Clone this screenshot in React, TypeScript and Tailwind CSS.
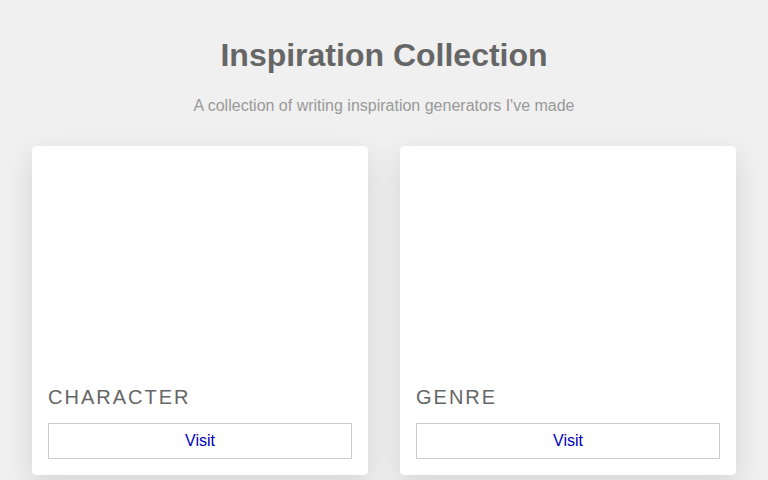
const items = ['Character', 'Genre']

function Card({ name }: { name: string }) {
  return (
    <div className="bg-white rounded-[4px] shadow-[0_10px_30px_rgba(0,0,0,0.12)] p-4 flex flex-col">
      <div className="h-[221px]" />
      <p className="text-[20px] leading-[28px] tracking-[2px] uppercase text-[#666]">{name}</p>
      <button className="mt-3 h-9 w-full border border-[#ccc] bg-white text-[16px] text-[#0000bb]">
        Visit
      </button>
    </div>
  )
}

export default function App() {
  return (
    <div className="min-h-screen bg-[#f0f0f0] px-8 pt-[37px] font-['Liberation_Sans',Arial,sans-serif]">
      <h1 className="text-center text-[32px] leading-[37px] font-bold text-[#666]">Inspiration Collection</h1>
      <p className="mt-[20px] text-center text-[16px] leading-6 text-[#999]">
        A collection of writing inspiration generators I've made
      </p>
      <div className="mt-[28px] grid grid-cols-2 gap-8">
        {items.map(n => <Card key={n} name={n} />)}
      </div>
    </div>
  )
}
